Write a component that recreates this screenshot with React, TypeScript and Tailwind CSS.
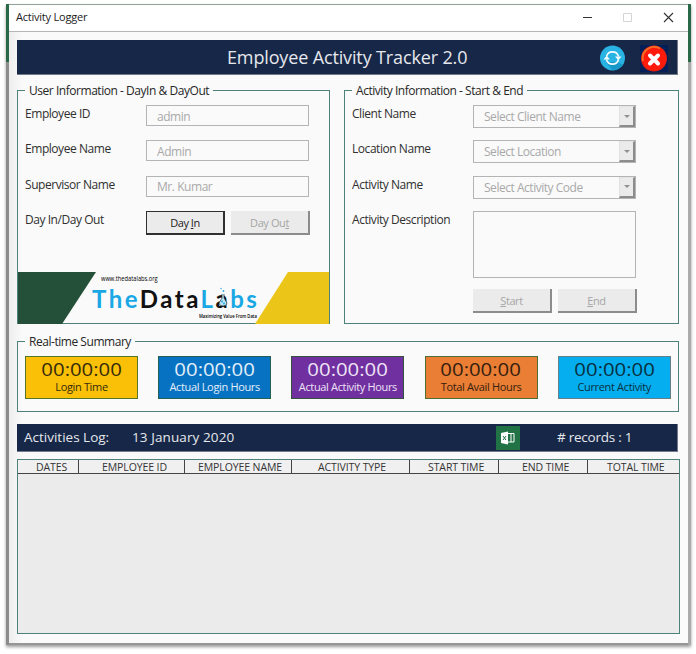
import type { ReactNode } from "react";

const textInput =
  "flex h-[21px] w-[163px] items-center border border-[#b4b4b4] bg-[#fafafa] pl-[10px] pt-[2px] text-[12px] leading-none tracking-[-0.45px] text-[#a9a9a9] whitespace-nowrap";
const flatButton =
  "flex h-[24px] w-[79px] items-center justify-center border-r-2 border-b-2 border-[#8c8c8c] bg-[#ebebeb] pt-px text-[11px] leading-none tracking-[-0.4px] text-[#a6a6a6]";
const fieldLabel = "w-[121px] shrink-0 text-[12px] leading-[17px] tracking-[-0.45px] whitespace-nowrap text-[#303030]";

function Group({ title, className, children }: { title: string; className: string; children: ReactNode }) {
  return (
    <section className={`relative border border-[#4f817b] ${className}`}>
      <h2 className="absolute -top-[9px] left-[7px] bg-[#fafafa] px-[4px] text-[12px] leading-[17px] tracking-[-0.46px] whitespace-nowrap text-[#262626]">
        {title}
      </h2>
      {children}
    </section>
  );
}

function Row({ label, children }: { label: string; children: ReactNode }) {
  return (
    <div className="flex h-[35.3px] items-start">
      <div className={fieldLabel}>{label}</div>
      {children}
    </div>
  );
}

function Combo({ text }: { text: string }) {
  return (
    <div className="flex h-[23px] w-[163px] items-center justify-between border border-[#b4b4b4] pl-[10px] text-[12px] leading-none tracking-[-0.47px] whitespace-nowrap text-[#a9a9a9]">
      <span className="pt-px">{text}</span>
      <span className="flex h-[21px] w-[16px] items-center justify-center border-t border-r-2 border-b-2 border-l border-t-[#e4e4e4] border-r-[#8c8c8c] border-b-[#8c8c8c] border-l-[#e0e0e0] bg-[#ebebeb]">
        <span className="border-x-[3px] border-t-[3px] border-x-transparent border-t-[#909090]" />
      </span>
    </div>
  );
}

function Logo() {
  return (
    <div className="flex h-[52px] items-stretch">
      <svg width="78" height="52" className="shrink-0">
        <path d="M0 0H78L44 52H0Z" fill="#245039" />
      </svg>
      <div className="flex w-[159px] shrink-0 flex-col whitespace-nowrap">
        <div className="ml-[5px] mt-[2px] h-[10px] w-max origin-left scale-x-[0.88] text-[6.5px] leading-[10px] text-black">www.thedatalabs.org</div>
        <div className="-ml-[4px] mt-px h-[27px] font-['Lato'] text-[24px] leading-[28px] font-bold tracking-[2.5px] text-[#111]">
          <span className="text-[#1aa8e5]">The</span>Data<span className="text-[#1aa8e5]">L</span>
          <span className="relative">
            a
            <svg viewBox="0 0 12 20" className="absolute top-[3px] left-[1px] h-[20px] w-[12px]">
              <path d="M5 7v4l-3 5q0 3 4 3t4-3l-3-5V7" fill="#b9e4f5" stroke="#333" strokeWidth=".7" />
              <circle cx="4" cy="1.500" r=".7" fill="#1aa8e5" />
              <circle cx="6.500" cy="4" r=".9" fill="#1aa8e5" />
              <circle cx="5" cy="14.500" r=".9" fill="#1aa8e5" />
              <circle cx="7" cy="16.500" r=".9" fill="#1aa8e5" />
            </svg>
          </span>
          <span className="text-[#1aa8e5]">bs</span>
        </div>
        <div className="ml-[103px] w-max origin-left scale-x-[0.7] text-[6px] leading-[8px] font-semibold text-black">Maximizing Value From Data</div>
      </div>
      <svg width="74" height="52" className="shrink-0">
        <path d="M33 0H74V52H0Z" fill="#ecc519" />
      </svg>
    </div>
  );
}

const cards = [
  { label: "Login Time", style: "bg-[#fabf07] text-[#352b0a] border-[#53762b]" },
  { label: "Actual Login Hours", style: "bg-[#0872c2] text-[#e3effa] border-[#245f55]" },
  { label: "Actual Activity Hours", style: "bg-[#7030a0] text-[#efe3f7] border-[#35523f]" },
  { label: "Total Avail Hours", style: "bg-[#e97e34] text-[#35200f] border-[#4c6f3a]" },
  { label: "Current Activity", style: "bg-[#05aeee] text-[#08303f] border-[#66808a]" },
];

const columns = [
  { name: "DATES", style: "w-[61px] pl-[18px]" },
  { name: "EMPLOYEE ID", style: "w-[106px] pl-[23px]" },
  { name: "EMPLOYEE NAME", style: "w-[107px] pl-[13px]" },
  { name: "ACTIVITY TYPE", style: "w-[118px] pl-[26px]" },
  { name: "START TIME", style: "w-[89px] pl-[18px]" },
  { name: "END TIME", style: "w-[89px] pl-[23px]" },
  { name: "TOTAL TIME", style: "w-[91px] pl-[19px] border-r-0" },
];

export default function App() {
  return (
    <div className="relative h-[654px] w-[696px] overflow-hidden bg-white pt-[4px] pl-[6px] font-['Open_Sans','Noto_Sans',sans-serif]">
      <div className="flex h-[641px] w-[685px] shadow-[0_2px_3px_#9b9b9b]">
        <div className="flex w-[3px] shrink-0 flex-col bg-[#8c8c8c]">
          <div className="h-[58px] bg-[#2a6947]" />
        </div>
        <div className="flex w-[679px] flex-col border-t border-b-2 border-t-[#8fa397] border-b-[#969696] bg-[#fafafa]">
          <header className="flex h-[27px] shrink-0 items-center border-b border-[#b5b5b5] bg-white pl-[7px] text-[#222]">
            <span className="-mt-[3px] w-[567px] text-[11px] leading-none tracking-[-0.22px] whitespace-nowrap">Activity Logger</span>
            <svg width="92" height="20" viewBox="0 0 92 20" fill="none" className="shrink-0">
              <path d="M0 9.500H9" stroke="#333" />
              <path d="M40.500 5.500h8v8h-8z" stroke="#d5d5d5" />
              <path d="M81 5l9 9M90 5l-9 9" stroke="#333" strokeWidth="1.100" />
            </svg>
          </header>

          <main className="flex h-[611px] flex-col bg-linear-to-r from-[#ededed] from-0% to-[#fafafa] to-[2%] pt-[8px] pl-[8px]">
            <div className="flex h-[35px] w-[661px] shrink-0 items-center border-r border-b border-[#727988] bg-[#172747]">
              <h1 className="ml-[210px] w-[372px] text-[18px] leading-none tracking-[-0.14px] whitespace-nowrap text-[#e6e8ed]">
                Employee Activity Tracker 2.0
              </h1>
              <svg width="26" height="26" viewBox="0 0 26 26" fill="none" className="mt-[2px] shrink-0">
                <circle cx="13.500" cy="13" r="12.500" fill="#28b3e3" />
                <path d="M19 17l5 3q-5 6-11 5l-6-8z" fill="#1698c8" />
                <path d="M7.500 11.500a6.200 6.200 0 0 1 12 0M19.500 14.500a6.200 6.200 0 0 1-12 0" stroke="#f4fcff" strokeWidth="1.600" />
                <path d="M16 11.500h6.500l-3.200 3.700zM4.500 14.500H11l-3.300-3.700z" fill="#f4fcff" />
              </svg>
              <div className="mt-[2px] ml-[15px] flex h-[27px] w-[28px] items-center justify-center bg-[#041f58]">
                <svg width="28" height="27" viewBox="0 0 28 27" fill="none">
                  <circle cx="14" cy="13.500" r="13" fill="#e12211" />
                  <circle cx="14" cy="13.500" r="11.800" fill="#ff1a0c" />
                  <path d="M3 16A11.500 11.500 0 0 1 20 3.500" stroke="#f36b24" strokeWidth="2" />
                  <path d="M10 10.500l8 8M18 10.500l-8 8" stroke="#fff" strokeWidth="4" strokeLinecap="round" />
                </svg>
              </div>
            </div>

            <div className="mt-[15px] flex h-[234px] shrink-0 gap-[14px]">
              <Group title="User Information - DayIn & DayOut" className="w-[313px]">
                <div className="h-[181px] pt-[14px] pl-[7px]">
                  <Row label="Employee ID"><div className={textInput}>admin</div></Row>
                  <Row label="Employee Name"><div className={textInput}>Admin</div></Row>
                  <Row label="Supervisor Name"><div className={textInput}>Mr. Kumar</div></Row>
                  <Row label="Day In/Day Out">
                    <button className="flex h-[24px] w-[79px] items-center justify-center border border-r-2 border-b-2 border-[#303030] bg-[#ebebeb] pt-px text-[11px] leading-none tracking-[-0.5px] text-[#222]">
                      <span>Day <u>I</u>n</span>
                    </button>
                    <button className={`${flatButton} ml-[6px]`}><span>Day Ou<u>t</u></span></button>
                  </Row>
                </div>
                <Logo />
              </Group>

              <Group title="Activity Information - Start & End" className="w-[335px] pt-[14px] pl-[7px]">
                <Row label="Client Name"><Combo text="Select Client Name" /></Row>
                <Row label="Location Name"><Combo text="Select Location" /></Row>
                <Row label="Activity Name"><Combo text="Select Activity Code" /></Row>
                <div className="flex h-[78px] items-start">
                  <div className={fieldLabel}>Activity Description</div>
                  <div className="h-[67px] w-[163px] border border-[#b4b4b4]" />
                </div>
                <div className="flex gap-[6px] pl-[121px]">
                  <button className={flatButton}><span><u>S</u>tart</span></button>
                  <button className={flatButton}><span><u>E</u>nd</span></button>
                </div>
              </Group>
            </div>

            <Group title="Real-time Summary" className="mt-[17px] flex h-[71px] w-[662px] shrink-0 gap-[20.2px] pt-[14px] pl-[7px]">
              {cards.map((card) => (
                <div key={card.label} className={`flex h-[43px] w-[113px] shrink-0 flex-col items-center border whitespace-nowrap ${card.style}`}>
                  <div className="mt-[3px] h-[19px] scale-x-[1.13] text-[18px] leading-[18px]">00:00:00</div>
                  <div className="text-[11px] leading-[15px] tracking-[-0.34px]">{card.label}</div>
                </div>
              ))}
            </Group>

            <div className="mt-[12px] flex h-[28px] w-[661px] shrink-0 items-center border-r border-b border-[#727988] bg-[#172747] text-[13.5px] leading-none whitespace-nowrap text-[#e6e8ed]">
              <span className="ml-[7px] w-[108px]">Activities Log:</span>
              <span className="w-[364px] tracking-[0.1px]">13 January 2020</span>
              <svg width="24" height="24" viewBox="0 0 24 24" className="shrink-0">
                <path d="M0 0h24v24H0z" fill="#217346" />
                <path d="M5 7l7-1.500v13L5 17z" fill="#fff" />
                <path d="M12 7.500h6v8.500h-6M15 7.500v8.500" stroke="#fff" fill="none" />
                <path d="M7 10l3 4M10 10l-3 4" stroke="#217346" />
              </svg>
              <span className="ml-[37px] tracking-[-0.25px]"># records : 1</span>
            </div>

            <div className="mt-[7px] h-[175px] w-[663px] shrink-0 border border-[#4f817b] bg-[#ebebeb]">
              <div className="flex h-[14px] border-b border-[#444] bg-[#f0f0f0]">
                {columns.map((column) => (
                  <div key={column.name} className={`shrink-0 border-r border-[#444] text-[10.5px] leading-[14px] tracking-[-0.1px] whitespace-nowrap text-[#333] ${column.style}`}>
                    {column.name}
                  </div>
                ))}
              </div>
            </div>
          </main>
        </div>
        <div className="flex w-[3px] shrink-0 flex-col bg-[#aaa]">
          <div className="h-[58px] bg-[#2a6947]" />
        </div>
      </div>
    </div>
  );
}
